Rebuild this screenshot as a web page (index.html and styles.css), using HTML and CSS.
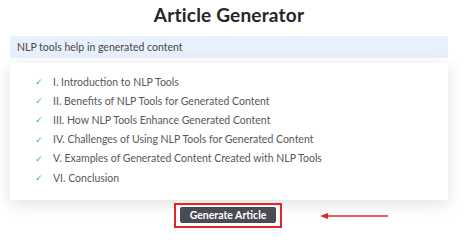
FILE: index.html
```html
<!DOCTYPE html>
<html lang="en">
<head>
    <meta charset="UTF-8">
    <meta name="viewport" content="width=device-width, initial-scale=1.0">
    <title>Article Generator</title>
    <link rel="stylesheet" href="styles.css">
</head>
<body>
    <div class="page">
        <h1 class="title">Article Generator</h1>

        <!-- topic entered by the user -->
        <div class="topic">NLP tools help in generated content</div>

        <!-- generated outline -->
        <div class="outline">
            <ul class="outline-list">
                <li><span class="check">&#10003;</span>I. Introduction to NLP Tools</li>
                <li><span class="check">&#10003;</span>II. Benefits of NLP Tools for Generated Content</li>
                <li><span class="check">&#10003;</span>III. How NLP Tools Enhance Generated Content</li>
                <li><span class="check">&#10003;</span>IV. Challenges of Using NLP Tools for Generated Content</li>
                <li><span class="check">&#10003;</span>V. Examples of Generated Content Created with NLP Tools</li>
                <li><span class="check">&#10003;</span>VI. Conclusion</li>
            </ul>
        </div>

        <div class="actions">
            <div class="highlight">
                <button class="generate">Generate Article</button>
            </div>
            <svg class="arrow" width="70" height="8" viewBox="0 0 70 8">
                <line x1="6" y1="4" x2="68" y2="4" stroke="#e0262b" stroke-width="1.6"/>
                <polygon points="0,4 8,1 8,7" fill="#e0262b"/>
            </svg>
        </div>
    </div>
</body>
</html>
```

FILE: styles.css
```css
/* Article generator page */
body {
    margin: 0;
    background-color: #ffffff;
    font-family: Lato, "Open Sans", sans-serif;
    color: #444;
}

.page {
    width: 438px;
    margin-left: 10px;
    padding-top: 2px;
}

.title {
    margin: 0;
    text-align: center;
    font-size: 19px;
    font-weight: bold;
    color: #262626;
    height: 34px;
    line-height: 25px;
    letter-spacing: 0.2px;
}

.topic {
    background-color: #e8f0fd;
    height: 22px;
    line-height: 22px;
    padding-left: 7px;
    font-size: 10.5px;
    color: #484848;
}

.outline {
    margin-top: 5px;
    background-color: #fff;
    box-shadow: 0 4px 16px rgba(0, 0, 0, 0.12);
    height: 137px;
}

.outline-list {
    list-style: none;
    margin: 0;
    padding: 9px 0 0 25px;
}

.outline-list li {
    display: flex;
    align-items: center;
    height: 19.2px;
    font-size: 10.5px;
    color: #585858;
}

.check {
    width: 18px;
    color: #35a9b5;
    font-size: 9px;
}

.actions {
    position: relative;
    display: flex;
    justify-content: center;
    padding-top: 3px;
}

.highlight {
    border: 2px solid #e0262b;
    padding: 2px 4px 3px 4px;
    margin-left: -2px;
}

.generate {
    display: block;
    background-color: #4b4b55;
    color: #fff;
    border: none;
    border-radius: 2px;
    width: 96px;
    height: 16px;
    padding: 0;
    font-family: Lato, "Open Sans", sans-serif;
    font-size: 10.5px;
    font-weight: bold;
}

.arrow {
    position: absolute;
    left: 310px;
    top: 12px;
}
```
